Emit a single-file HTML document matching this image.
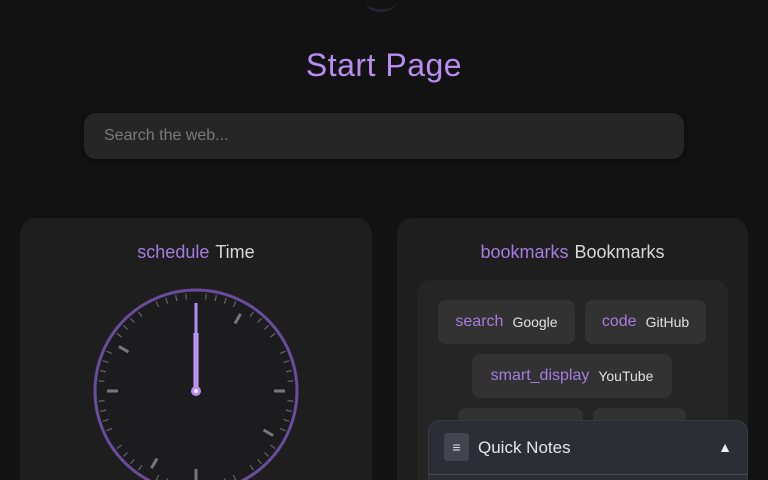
<!DOCTYPE html>
<html><head><meta charset="utf-8"><style>
*{margin:0;padding:0;box-sizing:border-box}
html,body{width:768px;height:480px;overflow:hidden;background:#121212;font-family:"Liberation Sans",sans-serif;position:relative}
.abs{position:absolute}
h1{position:absolute;left:0;width:768px;top:47px;text-align:center;font-weight:400;font-size:32px;color:#b98cf2;letter-spacing:0.5px}
.search{left:84px;top:113px;width:600px;height:46px;background:#262626;border-radius:12px;color:#7a7a7a;font-size:16px;padding:14px 20px;box-shadow:0 2px 8px rgba(0,0,0,.4)}
.card{background:#1e1e1f;border-radius:16px 16px 0 0}
.ct{font-size:18px;color:#d8d8d8;text-align:center}
.ct span{color:#a57de0;margin-right:6px}
.inner{left:417px;top:280px;width:311px;height:200px;background:#252526;border-radius:14px 14px 0 0}
.bm{position:absolute;height:44px;background:#323233;border-radius:8px;font-size:14px;color:#e0e0e0;display:flex;align-items:center;justify-content:center}
.bm span{color:#a57de0;font-size:16px;margin-right:9px}
.qn{left:428px;top:420px;width:320px;height:60px;background:#2d2d36;border-radius:12px 12px 0 0;border:1px solid #3a3a44;border-bottom:none}
.qn .ic{position:absolute;left:15px;top:12px;width:25px;height:28px;background:#44444e;border-radius:3px;color:#ddd;font-size:14px;text-align:center;line-height:28px}
.qn .t{position:absolute;left:49px;top:17px;font-size:17px;color:#e6e6e6}
.qn .ar{position:absolute;right:15px;top:18px;font-size:14px;color:#eee}
.qn .ln{position:absolute;left:0;right:0;top:53px;border-top:1px solid #4a4a55}
</style></head><body>
<div class="abs" style="left:366px;top:-6px;width:30px;height:18px;border-radius:50%;border-bottom:3px solid #2e2846;opacity:.7"></div>
<h1>Start Page</h1>
<div class="abs search">Search the web...</div>

<div class="abs card" style="left:20px;top:218px;width:352px;height:262px"></div>
<div class="abs ct" style="left:20px;top:242px;width:352px"><span>schedule</span>Time</div>
<svg class="abs" style="left:88px;top:283px" width="216" height="197" viewBox="-108 -108 216 197">
<circle r="101" fill="#1c1b1e" stroke="#6a4c9c" stroke-width="3"/>
<g id="ticks"></g>
<line x1="0" y1="0" x2="0" y2="-58" stroke="#c8a6f4" stroke-width="5"/>
<line x1="0" y1="0" x2="0" y2="-88" stroke="#b58ef0" stroke-width="3"/>
<circle r="5" fill="#b58ef0"/><circle r="2" fill="#f2e8ff"/>
</svg>
<script>
var g=document.getElementById('ticks'),s='';
for(var i=0;i<60;i++){var a=i*Math.PI/30,sn=Math.sin(a),cs=-Math.cos(a);
if(i%5==0){if(i==0||i==10||i==25||i==40||i==55)continue;s+='<line x1="'+78*sn+'" y1="'+78*cs+'" x2="'+89*sn+'" y2="'+89*cs+'" stroke="#777" stroke-width="3"/>';}
else s+='<line x1="'+92*sn+'" y1="'+92*cs+'" x2="'+98*sn+'" y2="'+98*cs+'" stroke="#666" stroke-width="1.2"/>';}
g.innerHTML=s;
</script>

<div class="abs card" style="left:397px;top:218px;width:351px;height:262px"></div>
<div class="abs ct" style="left:397px;top:242px;width:351px"><span>bookmarks</span>Bookmarks</div>
<div class="abs inner"></div>
<div class="bm" style="left:438px;top:300px;width:137px"><span>search</span>Google</div>
<div class="bm" style="left:585px;top:300px;width:121px"><span>code</span>GitHub</div>
<div class="bm" style="left:472px;top:354px;width:200px"><span>smart_display</span>YouTube</div>
<div class="bm" style="left:458px;top:408px;width:125px"></div>
<div class="bm" style="left:593px;top:408px;width:93px"></div>

<div class="abs qn"><div class="ic">≡</div><div class="t">Quick Notes</div><div class="ar">▲</div><div class="ln"></div></div>
</body></html>
